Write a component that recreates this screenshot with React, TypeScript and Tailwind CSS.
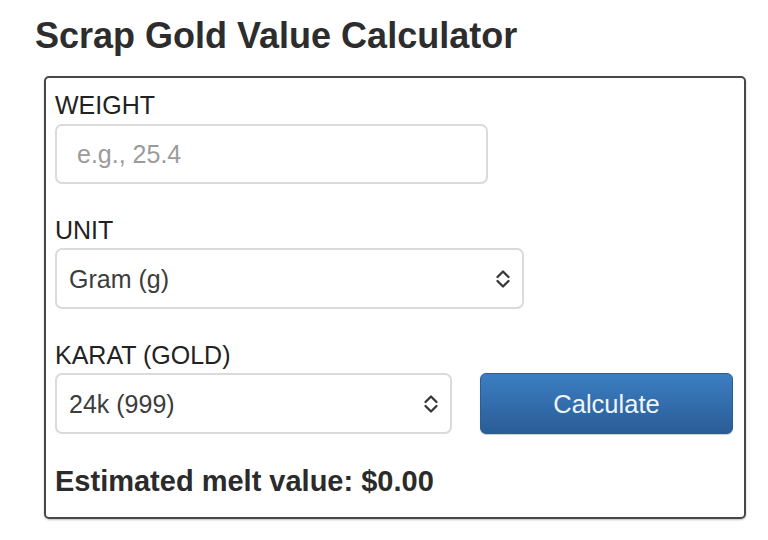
import React from "react";

function Chevrons() {
  return (
    <svg width="16" height="22" viewBox="0 0 16 22" fill="none" stroke="#383838" strokeWidth="2.3" strokeLinecap="round" strokeLinejoin="round">
      <path d="M2.5 9 L8 3.5 L13.5 9" />
      <path d="M2.5 13 L8 18.5 L13.5 13" />
    </svg>
  );
}

function FakeSelect({ value, width }: { value: string; width: string }) {
  return (
    <div className={`${width} h-[61px] border-2 border-[#dadada] rounded-[7px] bg-white flex items-center justify-between pl-[12px] pr-[11px]`}>
      <span className="text-[25px] leading-[28px] text-[#3c3c3c]">{value}</span>
      <Chevrons />
    </div>
  );
}

export default function App() {
  return (
    <div className="w-[768px] h-[540px] bg-white overflow-hidden font-['Liberation_Sans',Arial,sans-serif] text-[#2f2f2f]">
      <h1 className="pt-[14px] pl-[35px] text-[36px] leading-[43px] font-bold text-[#2d2d2d]">
        Scrap Gold Value Calculator
      </h1>
      <div className="ml-[44px] mt-[19px] w-[702px] border-2 border-[#474747] rounded-[5px] pt-[13px] pb-[20px] px-[9px] shadow-[0_1px_2px_rgba(0,0,0,0.25)]">
        <label className="block text-[25px] leading-[28px] text-[#222]">WEIGHT</label>
        <div className="mt-[5px] w-[433px] h-[60px] border-2 border-[#dadada] rounded-[7px] flex items-center pl-[20px]">
          <span className="text-[25px] leading-[28px] text-[#9b9b9b]">e.g., 25.4</span>
        </div>

        <label className="block mt-[32px] text-[25px] leading-[28px] text-[#222]">UNIT</label>
        <div className="mt-[4px]">
          <FakeSelect value="Gram (g)" width="w-[469px]" />
        </div>

        <label className="block mt-[32px] text-[25px] leading-[28px] text-[#222]">KARAT (GOLD)</label>
        <div className="mt-[4px] flex gap-[28px]">
          <FakeSelect value="24k (999)" width="w-[397px]" />
          <button className="w-[253px] h-[61px] rounded-[6px] border border-[#2b5d92] bg-gradient-to-b from-[#3c7ec2] to-[#2a5d97] text-[25.5px] leading-[28px] text-[#eef5fb] shadow-[0_1px_1px_rgba(0,0,0,0.2)]">
            Calculate
          </button>
        </div>

        <div className="mt-[31px] text-[29px] leading-[32px] font-bold text-[#2b2b2b]">
          Estimated melt value: $0.00
        </div>
      </div>
    </div>
  );
}
